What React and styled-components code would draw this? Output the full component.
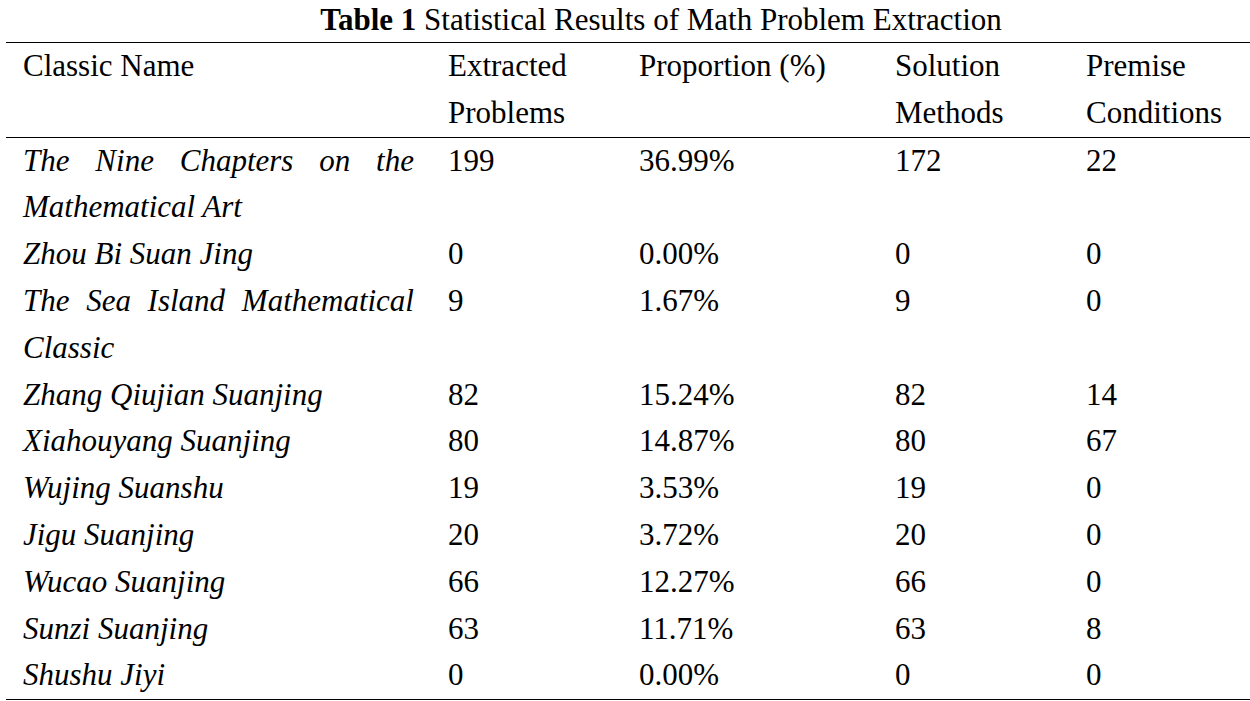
import React from "react";
import styled, { createGlobalStyle } from "styled-components";

const serifStack = `"Liberation Serif", Tinos, "Times New Roman", "DejaVu Serif", "Noto Serif", serif`;

const Global = createGlobalStyle`
  html, body { margin: 0; padding: 0; background: #fff; }
  body { font-family: ${serifStack}; color: #000; }
`;

const Frame = styled.div`
  width: 1250px;
  overflow: hidden;
`;

const Page = styled.div`
  padding-left: 6px;
  width: 1310px;
  font-family: ${serifStack};
  color: #000;
`;

const Caption = styled.div`
  font-family: ${serifStack};
  text-align: center;
  font-size: 31px;
  line-height: 39px;
  padding-bottom: 3px;
  white-space: nowrap;
`;

const Bold = styled.span`
  font-weight: bold;
`;

const Table = styled.table`
  width: 1310px;
  border-collapse: collapse;
  table-layout: fixed;
  font-family: ${serifStack};
  font-size: 31px;
  line-height: 46.8px;
  border-top: 1.5px solid #000;
  border-bottom: 1.5px solid #000;
`;

const Col = styled.col`
  width: ${(p) => p.$w}px;
`;

const HeadRow = styled.tr`
  border-bottom: 1.5px solid #000;
`;

const Th = styled.th`
  font-family: ${serifStack};
  font-size: 31px;
  font-weight: normal;
  text-align: left;
  vertical-align: top;
  padding: 0 17px;
`;

const Td = styled.td`
  font-family: ${serifStack};
  font-size: 31px;
  vertical-align: top;
  padding: 0 17px;
  text-align: ${(p) => (p.$name ? "justify" : "left")};
  font-style: ${(p) => (p.$name ? "italic" : "normal")};
`;

const rows = [
  ["The Nine Chapters on the Mathematical Art", "199", "36.99%", "172", "22"],
  ["Zhou Bi Suan Jing", "0", "0.00%", "0", "0"],
  ["The Sea Island Mathematical Classic", "9", "1.67%", "9", "0"],
  ["Zhang Qiujian Suanjing", "82", "15.24%", "82", "14"],
  ["Xiahouyang Suanjing", "80", "14.87%", "80", "67"],
  ["Wujing Suanshu", "19", "3.53%", "19", "0"],
  ["Jigu Suanjing", "20", "3.72%", "20", "0"],
  ["Wucao Suanjing", "66", "12.27%", "66", "0"],
  ["Sunzi Suanjing", "63", "11.71%", "63", "8"],
  ["Shushu Jiyi", "0", "0.00%", "0", "0"],
];

export default function App() {
  return (
    <Frame>
      <Global />
      <Page>
        <Caption>
          <Bold>Table 1</Bold> Statistical Results of Math Problem Extraction
        </Caption>
        <Table>
          <colgroup>
            <Col $w={425} />
            <Col $w={191} />
            <Col $w={256} />
            <Col $w={191} />
            <Col $w={247} />
          </colgroup>
          <thead>
            <HeadRow>
              <Th>Classic Name</Th>
              <Th>Extracted Problems</Th>
              <Th>Proportion (%)</Th>
              <Th>Solution Methods</Th>
              <Th>Premise Conditions</Th>
            </HeadRow>
          </thead>
          <tbody>
            {rows.map((r) => (
              <tr key={r[0]}>
                <Td $name>{r[0]}</Td>
                <Td>{r[1]}</Td>
                <Td>{r[2]}</Td>
                <Td>{r[3]}</Td>
                <Td>{r[4]}</Td>
              </tr>
            ))}
          </tbody>
        </Table>
      </Page>
    </Frame>
  );
}
